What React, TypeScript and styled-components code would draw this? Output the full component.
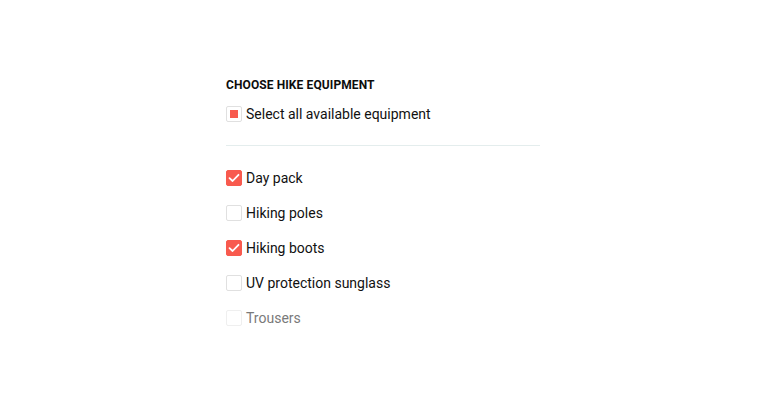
import React, { useState } from "react";
import styled, { createGlobalStyle } from "styled-components";

const GlobalStyle = createGlobalStyle`
  html, body {
    margin: 0;
    padding: 0;
    background: #ffffff;
  }
  body {
    font-family: Roboto, "Liberation Sans", sans-serif;
    color: #111;
  }
`;

const Wrapper = styled.div`
  padding: 77px 0 0 226px;
  width: 314px;
`;

const Title = styled.h3`
  margin: 0 0 3px;
  height: 16px;
  line-height: 16px;
  font-size: 12px;
  font-weight: 700;
  text-transform: uppercase;
  color: #0d0d0d;
  letter-spacing: 0.1px;
`;

const Divider = styled.hr`
  margin: 14px 0 14px;
  border: 0;
  height: 1px;
  background: #e4eded;
`;

const List = styled.div`
  display: flex;
  flex-direction: column;
`;

const Row = styled.label<{ $disabled?: boolean }>`
  display: flex;
  align-items: center;
  gap: 4px;
  height: 35px;
  font-size: 14px;
  color: ${(p) => (p.$disabled ? "#7a7a7a" : "#111")};
  cursor: ${(p) => (p.$disabled ? "default" : "pointer")};
  user-select: none;
`;

const Box = styled.span<{ $checked?: boolean; $disabled?: boolean }>`
  width: 16px;
  height: 16px;
  box-sizing: border-box;
  border-radius: 2px;
  display: flex;
  align-items: center;
  justify-content: center;
  flex-shrink: 0;
  background: ${(p) => (p.$checked ? "#f85a4e" : "#fff")};
  border: 1px solid
    ${(p) => (p.$checked ? "#f85a4e" : p.$disabled ? "#efefef" : "#e0e0e0")};
`;

const Dot = styled.span`
  width: 8px;
  height: 8px;
  background: #f85a4e;
`;

type Item = { id: string; label: string; disabled?: boolean };

const items: Item[] = [
  { id: "day", label: "Day pack" },
  { id: "poles", label: "Hiking poles" },
  { id: "boots", label: "Hiking boots" },
  { id: "uv", label: "UV protection sunglass" },
  { id: "trousers", label: "Trousers", disabled: true },
];

const Check = () => (
  <svg width="12" height="10" viewBox="0 0 12 10" fill="none">
    <path
      d="M1.5 5.2 L4.6 8 L10.5 1.8"
      stroke="#fff"
      strokeWidth="1.8"
      strokeLinecap="round"
      strokeLinejoin="round"
    />
  </svg>
);

export default function App() {
  const [checked, setChecked] = useState<Record<string, boolean>>({
    day: true,
    boots: true,
  });

  const available = items.filter((i) => !i.disabled);
  const count = available.filter((i) => checked[i.id]).length;
  const all = count === available.length;
  const some = count > 0 && !all;

  const toggle = (id: string) =>
    setChecked((c) => ({ ...c, [id]: !c[id] }));

  const toggleAll = () =>
    setChecked(Object.fromEntries(available.map((i) => [i.id, !all])));

  return (
    <>
      <GlobalStyle />
      <Wrapper>
        <Title>Choose hike equipment</Title>
        <Row onClick={toggleAll}>
          <Box $checked={all}>{all ? <Check /> : some ? <Dot /> : null}</Box>
          Select all available equipment
        </Row>
        <Divider />
        <List>
          {items.map((item) => (
            <Row
              key={item.id}
              $disabled={item.disabled}
              onClick={() => !item.disabled && toggle(item.id)}
            >
              <Box $checked={!!checked[item.id]} $disabled={item.disabled}>
                {checked[item.id] ? <Check /> : null}
              </Box>
              {item.label}
            </Row>
          ))}
        </List>
      </Wrapper>
    </>
  );
}
